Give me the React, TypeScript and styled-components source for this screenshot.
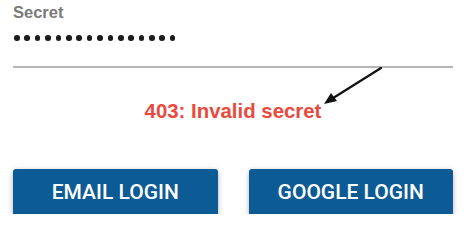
import React from 'react';
import styled, { createGlobalStyle } from 'styled-components';

const GlobalStyle = createGlobalStyle`
  html, body {
    margin: 0;
    padding: 0;
    background: #ffffff;
    overflow: hidden;
  }
  body {
    font-family: "Liberation Sans", Arial, sans-serif;
  }
`;

const Page = styled.div`
  width: 474px;
  height: 214px;
  box-sizing: border-box;
  padding: 2px 21px 0 13px;
  display: flex;
  flex-direction: column;
  position: relative;
`;

const Field = styled.div`
  display: flex;
  flex-direction: column;
  border-bottom: 2px solid #b5b5b5;
`;

const Label = styled.label`
  font-size: 16.5px;
  font-weight: 700;
  color: #7a7a7a;
  line-height: 20px;
`;

const Dots = styled.div`
  display: flex;
  gap: 4.8px;
  padding: 13px 0 25px 1px;
`;

const Dot = styled.span`
  width: 5.6px;
  height: 5.6px;
  border-radius: 50%;
  background: #1c1c1c;
`;

const ErrorRow = styled.div`
  position: relative;
  display: flex;
  justify-content: center;
  padding: 33px 0 0 0;
`;

const ErrorText = styled.p`
  margin: 0;
  font-size: 20.4px;
  font-weight: 700;
  color: #ea4a3e;
  line-height: 20px;
`;

const Arrow = styled.svg`
  position: absolute;
  left: 307px;
  top: -1px;
`;

const Buttons = styled.div`
  display: grid;
  grid-template-columns: 1fr 1fr;
  gap: 31px;
  margin-top: 48px;
`;

const Button = styled.button`
  height: 48px;
  border: none;
  border-radius: 3px;
  background: #0d5b95;
  color: #ffffff;
  font-family: Roboto, "Liberation Sans", sans-serif;
  font-weight: 500;
  font-size: 21px;
  padding: 11px 0 0 0;
  display: flex;
  justify-content: center;
  align-items: flex-start;
  box-shadow: 0 2px 4px rgba(0, 0, 0, 0.22), 0 1px 8px rgba(0, 0, 0, 0.1);
`;

export default function App() {
  return (
    <>
      <GlobalStyle />
      <Page>
        <Field>
          <Label>Secret</Label>
          <Dots>
            {Array.from({ length: 16 }).map((_, i) => (
              <Dot key={i} />
            ))}
          </Dots>
        </Field>
        <ErrorRow>
          <ErrorText>403: Invalid secret</ErrorText>
          <Arrow width="64" height="40" viewBox="0 0 64 40">
            <line x1="61" y1="1" x2="10" y2="33" stroke="#111" strokeWidth="2.2" strokeLinecap="round" />
            <polygon points="4,37 17,34 11,26" fill="#111" />
          </Arrow>
        </ErrorRow>
        <Buttons>
          <Button>EMAIL LOGIN</Button>
          <Button>GOOGLE LOGIN</Button>
        </Buttons>
      </Page>
    </>
  );
}
